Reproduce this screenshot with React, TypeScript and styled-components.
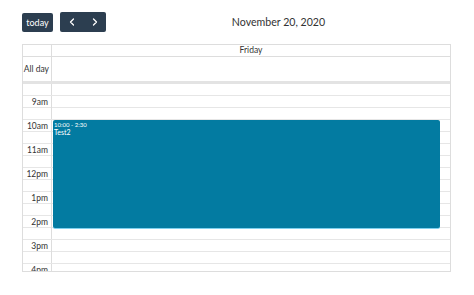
import React from 'react'
import styled, { createGlobalStyle } from 'styled-components'
import { ChevronLeft, ChevronRight } from 'lucide-react'

const Global = createGlobalStyle`
  html, body {
    margin: 0;
    padding: 0;
    background: #fff;
    font-family: Lato, "Noto Sans", sans-serif;
    color: #333;
  }
`

const hours = ['9am', '10am', '11am', '12pm', '1pm', '2pm', '3pm', '4pm', '5pm']

const App = () => {
  return (
    <>
      <Global />
      <Calendar>
        <Toolbar>
          <Chunk>
            <Button>today</Button>
            <Group>
              <NavButton aria-label="prev">
                <ChevronLeft size={12} strokeWidth={2.6} />
              </NavButton>
              <NavButton aria-label="next">
                <ChevronRight size={12} strokeWidth={2.6} />
              </NavButton>
            </Group>
          </Chunk>
          <Title>November 20, 2020</Title>
          <Chunk />
        </Toolbar>
        <Table>
          <HeaderRow>
            <AxisCell />
            <DayHeader>Friday</DayHeader>
          </HeaderRow>
          <AllDayRow>
            <AxisCell>
              <AllDayLabel>All day</AllDayLabel>
            </AxisCell>
            <DayCell />
          </AllDayRow>
          <Divider />
          <Scroller>
            <Slots>
              <SlotRow>
                <SlotLabel />
                <SlotLane />
              </SlotRow>
              {hours.map((h) => (
                <React.Fragment key={h}>
                  <SlotRow>
                    <SlotLabel>{h}</SlotLabel>
                    <SlotLane />
                  </SlotRow>
                  <SlotRow>
                    <SlotLabel />
                    <SlotLane />
                  </SlotRow>
                </React.Fragment>
              ))}
              <Event>
                <EventTime>10:00 - 2:30</EventTime>
                <EventTitle>Test2</EventTitle>
              </Event>
            </Slots>
          </Scroller>
        </Table>
      </Calendar>
    </>
  )
}

export default App

const Calendar = styled.div`
  width: 429px;
  margin: 12px 0 0 22px;
`
const Toolbar = styled.div`
  display: flex;
  align-items: center;
  justify-content: space-between;
  height: 20px;
  margin-bottom: 12px;
`
const Chunk = styled.div`
  display: flex;
  align-items: center;
  gap: 7px;
`
const Button = styled.button`
  height: 19px;
  width: 31px;
  padding: 0;
  border: none;
  border-radius: 2px;
  background: #2c3e50;
  color: #fff;
  font-family: Lato, sans-serif;
  font-size: 9px;
  line-height: 19px;
`
const Group = styled.div`
  display: flex;
  border-radius: 2px;
  overflow: hidden;
`
const NavButton = styled.button`
  width: 23px;
  height: 20px;
  padding: 0;
  border: none;
  background: #2c3e50;
  color: #fff;
  display: flex;
  align-items: center;
  justify-content: center;
`
const Title = styled.h2`
  margin: 0;
  font-size: 10.6px;
  font-weight: 400;
  color: #333;
`
const Table = styled.div`
  border: 1px solid #ddd;
`
const HeaderRow = styled.div`
  display: grid;
  grid-template-columns: 29px 1fr;
  height: 11px;
  border-bottom: 1px solid #ddd;
`
const AxisCell = styled.div`
  border-right: 1px solid #ddd;
  display: flex;
  align-items: center;
  justify-content: flex-end;
  padding-right: 2px;
`
const DayHeader = styled.div`
  font-size: 8.5px;
  line-height: 11px;
  text-align: center;
  color: #333;
`
const AllDayRow = styled.div`
  display: grid;
  grid-template-columns: 29px 1fr;
  height: 24px;
`
const AllDayLabel = styled.span`
  font-size: 8.5px;
  color: #333;
  white-space: nowrap;
`
const DayCell = styled.div``
const Divider = styled.div`
  height: 3px;
  background: #e3e3e3;
`
const Scroller = styled.div`
  height: 187px;
  overflow: hidden;
`
const Slots = styled.div`
  position: relative;
`
const SlotRow = styled.div`
  display: grid;
  grid-template-columns: 29px 1fr;
  height: 12px;
  border-bottom: 1px solid #e6e6e6;
  box-sizing: border-box;
`
const SlotLabel = styled.div`
  border-right: 1px solid #ddd;
  font-size: 8.5px;
  line-height: 12px;
  text-align: right;
  padding-right: 3px;
  color: #333;
  white-space: nowrap;
`
const SlotLane = styled.div``
const Event = styled.div`
  position: absolute;
  top: 36px;
  left: 30px;
  right: 10px;
  height: 108px;
  background: #037ba1;
  border-radius: 2px;
  box-shadow: 0 1px 0 #7fd0ef;
  color: #fff;
  padding: 2px 1px;
  box-sizing: border-box;
  overflow: hidden;
`
const EventTime = styled.div`
  font-size: 6px;
  line-height: 6px;
`
const EventTitle = styled.div`
  font-size: 7px;
  line-height: 8px;
`
